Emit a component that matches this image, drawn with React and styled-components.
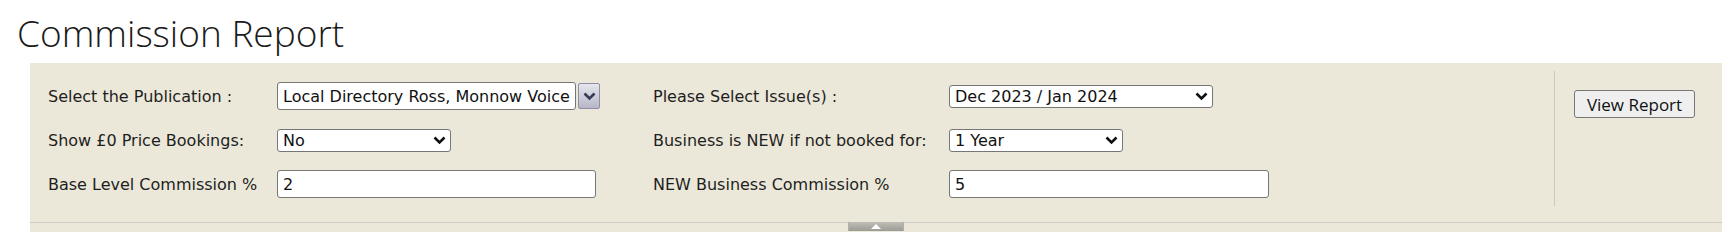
import React from "react";
import styled, { createGlobalStyle } from "styled-components";

const GlobalStyle = createGlobalStyle`
  body {
    margin: 0;
    background: #ffffff;
    font-family: "DejaVu Sans", Verdana, sans-serif;
    color: #222222;
  }
`;

const Page = styled.div`
  width: 1731px;
`;

const Title = styled.h1`
  margin: 8px 0 5px;
  padding-left: 17px;
  font-family: "Open Sans", "Liberation Sans", sans-serif;
  font-weight: 300;
  font-size: 37px;
  line-height: 50px;
  color: #1a1a1a;
`;

const Panel = styled.div`
  margin: 0 9px 0 30px;
  padding-top: 8px;
  background: #ebe8d9;
`;

const Body = styled.div`
  display: flex;
`;

const Fields = styled.div`
  box-sizing: border-box;
  flex: 0 0 1525px;
  display: grid;
  grid-template-columns: 229px 376px 296px 1fr;
  grid-auto-rows: 44px;
  padding: 3px 0 0 18px;
  border-right: 1px solid #c9c8c4;
  align-items: center;
`;

const Label = styled.label`
  font-size: 16px;
  color: #1e1e1e;
  white-space: nowrap;
`;

const Cell = styled.div`
  display: flex;
  align-items: center;
  gap: 2px;
`;

const TextBox = styled.input`
  box-sizing: border-box;
  width: ${({ $w }) => $w}px;
  height: 28px;
  padding: 0 5px;
  border: 1px solid #767676;
  border-radius: 3px;
  background: #ffffff;
  font-family: "DejaVu Sans", Verdana, sans-serif;
  font-size: 16px;
  color: #111111;
  outline: none;
`;

const ListBox = styled.div`
  box-sizing: border-box;
  width: 299px;
  height: 28px;
  padding: 0 5px;
  display: flex;
  align-items: center;
  border: 1px solid #767676;
  border-radius: 3px;
  background: #ffffff;
  font-size: 16px;
  color: #111111;
  white-space: nowrap;
  overflow: hidden;
`;

const DropButton = styled.button`
  box-sizing: border-box;
  width: 22px;
  height: 26px;
  padding: 0;
  display: flex;
  align-items: center;
  justify-content: center;
  border: 1px solid #8e8ea4;
  border-radius: 2px;
  background: linear-gradient(#e6e6ee, #b6b6c8);
`;

const SelectWrap = styled.div`
  position: relative;
  width: ${({ $w }) => $w}px;
  height: 23px;
`;

const Select = styled.select`
  box-sizing: border-box;
  width: 100%;
  height: 100%;
  padding: 0 22px 0 5px;
  appearance: none;
  border: 1px solid #767676;
  border-radius: 3px;
  background: #ffffff;
  font-family: "DejaVu Sans", Verdana, sans-serif;
  font-size: 16px;
  color: #111111;
  outline: none;
`;

const Chevron = styled.svg`
  position: absolute;
  right: 5px;
  top: 7px;
  pointer-events: none;
`;

const Actions = styled.div`
  padding: 19px 0 0 19px;
`;

const ViewButton = styled.button`
  box-sizing: border-box;
  width: 121px;
  height: 28px;
  padding: 0;
  border: 1px solid #767676;
  border-radius: 3px;
  background: #efefef;
  font-family: "Open Sans", "Liberation Sans", sans-serif;
  font-size: 17px;
  color: #111111;
`;

const Strip = styled.div`
  margin-top: 16px;
  height: 9px;
  border-top: 1px solid #cfccc6;
  display: flex;
  justify-content: center;
`;

const Toggle = styled.div`
  width: 54px;
  height: 9px;
  margin-top: -1px;
  display: flex;
  align-items: center;
  justify-content: center;
  background: linear-gradient(#bfbdb6, #9c9b95);
  border-left: 1px solid #b0afa8;
  border-right: 1px solid #b0afa8;
`;

const ChevronPath = ({ color }) => (
  <path d="M1.5 1.5 L6.5 6.5 L11.5 1.5" fill="none" stroke={color} strokeWidth="2.6" />
);

function Dropdown({ width, value, options }) {
  return (
    <SelectWrap $w={width}>
      <Select defaultValue={value}>
        {options.map((o) => (
          <option key={o}>{o}</option>
        ))}
      </Select>
      <Chevron width="13" height="9" viewBox="0 0 13 9">
        <ChevronPath color="#111" />
      </Chevron>
    </SelectWrap>
  );
}

export default function App() {
  return (
    <Page>
      <GlobalStyle />
      <Title>Commission Report</Title>
      <Panel>
        <Body>
          <Fields>
            <Label>Select the Publication :</Label>
            <Cell>
              <ListBox>Local Directory Ross, Monnow Voice</ListBox>
              <DropButton type="button">
                <svg width="13" height="9" viewBox="0 0 13 9">
                  <ChevronPath color="#3a3a58" />
                </svg>
              </DropButton>
            </Cell>
            <Label>Please Select Issue(s) :</Label>
            <Cell>
              <Dropdown width={264} value="Dec 2023 / Jan 2024" options={["Dec 2023 / Jan 2024", "Feb / Mar 2024"]} />
            </Cell>

            <Label>Show £0 Price Bookings:</Label>
            <Cell>
              <Dropdown width={174} value="No" options={["No", "Yes"]} />
            </Cell>
            <Label>Business is NEW if not booked for:</Label>
            <Cell>
              <Dropdown width={174} value="1 Year" options={["6 Months", "1 Year", "2 Years"]} />
            </Cell>

            <Label>Base Level Commission %</Label>
            <Cell>
              <TextBox $w={319} defaultValue="2" />
            </Cell>
            <Label>NEW Business Commission %</Label>
            <Cell>
              <TextBox $w={320} defaultValue="5" />
            </Cell>
          </Fields>
          <Actions>
            <ViewButton type="button">View Report</ViewButton>
          </Actions>
        </Body>
        <Strip>
          <Toggle>
            <svg width="10" height="5" viewBox="0 0 10 5">
              <path d="M0 5 L5 0 L10 5 Z" fill="#ffffff" />
            </svg>
          </Toggle>
        </Strip>
      </Panel>
    </Page>
  );
}
